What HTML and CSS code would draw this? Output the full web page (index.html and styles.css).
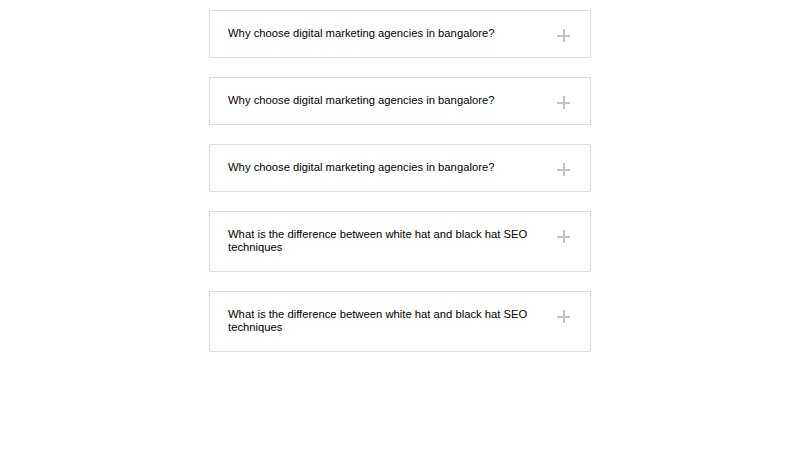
FILE: index.html
```html
<!DOCTYPE html>
<html lang="en">

<head>
    <meta charset="UTF-8">
    <meta name="viewport" content="width=device-width, initial-scale=1.0">
    <title>FAQ</title>
    <link rel="stylesheet" href="styles.css">
</head>

<body>
    <div class="faq">
        <div class="item">
            <div class="question">Why choose digital marketing agencies in bangalore?</div>
            <span class="plus"></span>
        </div>
        <div class="item">
            <div class="question">Why choose digital marketing agencies in bangalore?</div>
            <span class="plus"></span>
        </div>
        <div class="item">
            <div class="question">Why choose digital marketing agencies in bangalore?</div>
            <span class="plus"></span>
        </div>
        <div class="item">
            <div class="question">What is the difference between white hat and black hat SEO techniques</div>
            <span class="plus"></span>
        </div>
        <div class="item">
            <div class="question">What is the difference between white hat and black hat SEO techniques</div>
            <span class="plus"></span>
        </div>
    </div>
</body>

</html>
```

FILE: styles.css
```css
* {
    padding: 0;
    margin: 0;
    box-sizing: border-box;
}

html,
body {
    background-color: white;
    font-family: "Liberation Sans", Arial, sans-serif;
    color: #000;
}

.faq {
    width: 382px;
    margin: 10px auto 0;
    display: flex;
    flex-direction: column;
    gap: 19px;
}

.faq .item {
    border: 1px solid #dcdcdc;
    padding: 15px 18px;
    display: flex;
    align-items: flex-start;
    justify-content: space-between;
}

.faq .question {
    flex: 1;
    font-size: 11.25px;
    line-height: 13px;
    padding-top: 1px;
    padding-bottom: 2px;
    margin-right: 24px;
}

.faq .plus {
    position: relative;
    width: 13px;
    height: 13px;
    margin-top: 3px;
    margin-right: 2px;
    flex-shrink: 0;
}

.faq .plus::before,
.faq .plus::after {
    content: "";
    position: absolute;
    background-color: #c2c2c2;
}

.faq .plus::before {
    left: 0;
    top: 6px;
    width: 13px;
    height: 1.5px;
}

.faq .plus::after {
    left: 6px;
    top: 0;
    width: 1.5px;
    height: 13px;
}
```
